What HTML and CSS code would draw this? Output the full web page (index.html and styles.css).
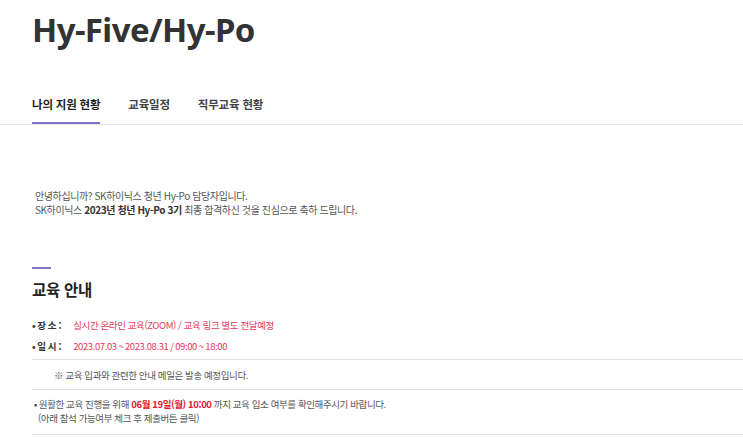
FILE: index.html
```html
<!DOCTYPE html>
<html lang="ko">
<head>
<meta charset="utf-8">
<link rel="stylesheet" href="styles.css">
</head>
<body>
<header class="top">
  <h1 class="title">Hy-Five/Hy-Po</h1>
  <nav class="tabs">
    <a class="tab active">나의 지원 현황</a>
    <a class="tab">교육일정</a>
    <a class="tab">직무교육 현황</a>
  </nav>
</header>
<main class="content">
  <div class="greeting">
    <p>안녕하십니까? SK하이닉스 청년 Hy-Po 담당자입니다.</p>
    <p>SK하이닉스 <b>2023년 청년 Hy-Po 3기</b> 최종 합격하신 것을 진심으로 축하 드립니다.</p>
  </div>
  <section class="section">
    <span class="section-mark"></span>
    <h2 class="section-title">교육 안내</h2>
    <ul class="info">
      <li><span class="label">장 소 :</span><span class="red">실시간 온라인 교육(ZOOM) / 교육 링크 별도 전달예정</span></li>
      <li><span class="label">일 시 :</span><span class="red">2023.07.03 ~ 2023.08.31 / 09:00 ~ 18:00</span></li>
    </ul>
    <div class="row note">※ 교육 입과와 관련한 안내 메일은 발송 예정입니다.</div>
    <div class="row confirm">
      <p><span class="dot">•</span>원활한 교육 진행을 위해 <b class="red-strong">06월 19일(월) 10:00</b> 까지 교육 입소 여부를 확인해주시기 바랍니다.</p>
      <p class="sub">(아래 참석 가능여부 체크 후 제출버튼 클릭)</p>
    </div>
  </section>
</main>
</body>
</html>
```
FILE: styles.css
```css
* { box-sizing: border-box; }
html, body { margin: 0; padding: 0; background: #fff; }
body {
  font-family: "Noto Sans CJK KR", "Noto Sans", sans-serif;
  color: #333;
  overflow: hidden;
}
p { margin: 0; }
.top {
  border-bottom: 1px solid #e6e6e6;
}
.title {
  margin: 0;
  padding: 8px 0 0 32px;
  font-family: "Noto Sans", "Noto Sans CJK KR", sans-serif;
  font-size: 33px;
  font-weight: 700;
  line-height: 44px;
  color: #333;
  letter-spacing: -0.6px;
}
.tabs {
  display: flex;
  gap: 28px;
  padding: 43px 0 0 32px;
}
.tab {
  font-size: 11.5px;
  font-weight: 700;
  color: #444;
  padding-bottom: 9px;
  line-height: 18px;
  border-bottom: 2px solid transparent;
  letter-spacing: -0.2px;
}
.tab.active {
  color: #222;
  border-bottom-color: #7b74c9;
}
.content {
  padding: 64px 0 0 32px;
}
.greeting {
  padding-left: 3px;
  font-size: 10px;
  line-height: 14px;
  color: #555;
  letter-spacing: -0.4px;
}
.greeting b { color: #333; }
.section {
  margin-top: 50px;
}
.section-mark {
  display: block;
  width: 19px;
  height: 2px;
  background: #7b74c9;
}
.section-title {
  margin: 9px 0 0 0;
  font-size: 15.5px;
  font-weight: 700;
  line-height: 22px;
  color: #222;
  letter-spacing: -0.3px;
}
.info {
  list-style: none;
  margin: 15px 0 0 0;
  padding: 0 0 2px 0;
  font-size: 9.5px;
  line-height: 21px;
  letter-spacing: -0.4px;
}
.info li::before {
  content: "•";
  font-weight: 700;
  margin-right: 2px;
  color: #333;
}
.label {
  display: inline-block;
  width: 36px;
  font-weight: 700;
  color: #333;
}
.red { color: #e8385a; }
.row {
  border-top: 1px solid #e2e2e2;
  font-size: 9.5px;
  color: #555;
  letter-spacing: -0.4px;
}
.note {
  padding: 7px 0 6px 22px;
  line-height: 16px;
}
.confirm {
  padding: 7px 0 9px 2px;
  line-height: 14px;
  border-bottom: 1px solid #e2e2e2;
}
.dot { margin-right: 2px; color: #333; }
.red-strong { color: #e8132d; }
.sub { padding-left: 4px; }
```
